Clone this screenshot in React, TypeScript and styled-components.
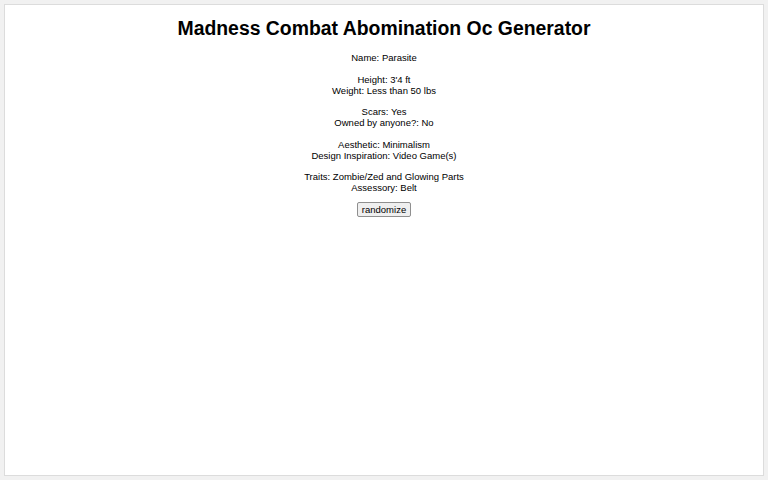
import React, { useState } from "react";
import styled, { createGlobalStyle } from "styled-components";

const GlobalStyle = createGlobalStyle`
  html, body {
    margin: 0;
    padding: 0;
    height: 100%;
    background: #f1f1f1;
  }
  #root {
    height: 100%;
  }
`;

const Page = styled.div`
  box-sizing: border-box;
  height: 100%;
  padding: 4px;
`;

const Sheet = styled.div`
  box-sizing: border-box;
  height: 100%;
  background: #ffffff;
  border: 1px solid #dcdcdc;
  text-align: center;
  font-family: "Liberation Sans", Arial, sans-serif;
  color: #000;
`;

const Title = styled.h1`
  margin: 12px 0 13px;
  font-size: 19.4px;
  font-weight: bold;
  line-height: 23px;
`;

const Stats = styled.div`
  font-size: 9.5px;
  line-height: 10.85px;
`;

const Randomize = styled.button`
  margin-top: 8px;
  font-family: "Liberation Sans", Arial, sans-serif;
  font-size: 9.5px;
  padding: 1px 4px;
  background: #efefef;
  border: 1px solid #8f8f8f;
  border-radius: 2px;
  color: #000;
`;

const names = ["Parasite", "Husk", "Rotter", "Wretch"];

export default function App() {
  const [name, setName] = useState(names[0]);
  return (
    <>
      <GlobalStyle />
      <Page>
        <Sheet>
          <Title>Madness Combat Abomination Oc Generator</Title>
          <Stats>
            Name: {name}
            <br />
            <br />
            Height: 3'4 ft
            <br />
            Weight: Less than 50 lbs
            <br />
            <br />
            Scars: Yes
            <br />
            Owned by anyone?: No
            <br />
            <br />
            Aesthetic: Minimalism
            <br />
            Design Inspiration: Video Game(s)
            <br />
            <br />
            Traits: Zombie/Zed and Glowing Parts
            <br />
            Assessory: Belt
          </Stats>
          <Randomize
            onClick={() =>
              setName(names[(names.indexOf(name) + 1) % names.length])
            }
          >
            randomize
          </Randomize>
        </Sheet>
      </Page>
    </>
  );
}
